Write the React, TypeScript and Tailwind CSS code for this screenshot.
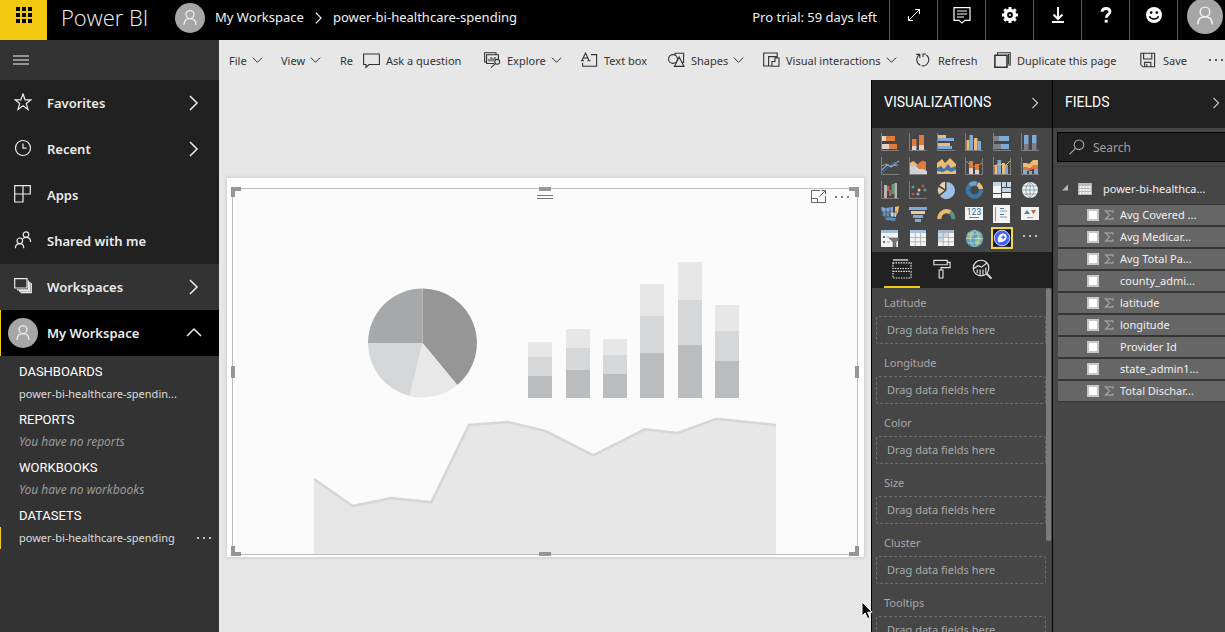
import type { ReactNode } from "react";

const OR = "#e07b3c";
const BL = "#7fa9d6";
const DB = "#3f74a8";
const YE = "#eebb75";
const LT = "#e3d3c6";
const GR = "#7d8185";
const WH = "#f4f4f4";
const AX = "#8d8d8d";

function Chevron({ dir, className }: { dir: "down" | "up" | "right"; className: string }) {
  const d = { down: "M1 2.5 L8 9.5 L15 2.5", up: "M1 10 L8 3 L15 10", right: "M2 1 L9 8 L2 15" }[dir];
  const box = dir === "right" ? "0 0 11 16" : "0 0 16 12";
  return (
    <svg viewBox={box} className={className} fill="none" stroke="currentColor" strokeWidth="1.5" aria-hidden="true">
      <path d={d} />
    </svg>
  );
}

function Person({ className }: { className: string }) {
  return (
    <svg viewBox="0 0 30 30" className={className} aria-hidden="true">
      <circle cx="15" cy="15" r="15" fill="#a6a6a6" />
      <g fill="none" stroke="#f2f2f2" strokeWidth="1.2">
        <circle cx="15" cy="11.6" r="4" />
        <path d="M9 22 C9 17.5 11.5 15.6 15 15.6 C18.5 15.6 21 17.5 21 22" />
      </g>
    </svg>
  );
}

function Dots({ className, fill = "currentColor" }: { className: string; fill?: string }) {
  return (
    <svg viewBox="0 0 16 4" className={className} fill={fill} aria-hidden="true">
      <circle cx="2" cy="2" r="1.1" />
      <circle cx="8" cy="2" r="1.1" />
      <circle cx="14" cy="2" r="1.1" />
    </svg>
  );
}

/* ---------- header ---------- */

const headerActions: { label: string; icon: ReactNode }[] = [
  {
    label: "Full screen",
    icon: (
      <svg viewBox="0 0 18 18" className="size-[18px]" fill="none" stroke="#fff" strokeWidth="1">
        <path d="M3.5 14.5 L14.5 3.5 M10 3.5 H14.5 V8 M3.5 10 V14.5 H8" />
      </svg>
    ),
  },
  {
    label: "Comments",
    icon: (
      <svg viewBox="0 0 18 18" className="size-[18px]" fill="none" stroke="#fff" strokeWidth="1.2">
        <path d="M1 1.6 H17 V14.4 H12 L9 17 L6 14.4 H1 Z M4 5 H14 M4 8 H14 M4 11 H11" />
      </svg>
    ),
  },
  {
    label: "Settings",
    icon: (
      <svg viewBox="0 0 18 18" className="size-[18px]">
        <circle cx="9" cy="9" r="4.6" fill="none" stroke="#fff" strokeWidth="3.4" />
        <path
          d="M9 1 V4 M9 14 V17 M1 9 H4 M14 9 H17 M3.3 3.3 L5.4 5.4 M12.6 12.6 L14.7 14.7 M3.3 14.7 L5.4 12.6 M12.6 5.4 L14.7 3.3"
          stroke="#fff"
          strokeWidth="3"
        />
        <circle cx="9" cy="9" r="1" fill="#fff" />
      </svg>
    ),
  },
  {
    label: "Download",
    icon: (
      <svg viewBox="0 0 18 18" className="size-[18px]" fill="none" stroke="#fff" strokeWidth="2">
        <path d="M9 1 V13 M4.5 8.5 L9 13 L13.5 8.5 M3 16 H15" />
      </svg>
    ),
  },
  {
    label: "Help",
    icon: (
      <svg viewBox="0 0 18 18" className="size-[18px]" fill="none" stroke="#fff" strokeWidth="2.8">
        <path d="M5 5.8 C5 3.6 6.6 2.5 9 2.5 C11.4 2.5 13 3.8 13 5.8 C13 8.4 9.2 8.4 9.2 11.8" />
        <path d="M7.7 15.2 H10.7" />
      </svg>
    ),
  },
  {
    label: "Feedback",
    icon: (
      <svg viewBox="0 0 18 18" className="size-[18px]">
        <circle cx="9" cy="9" r="8" fill="#fff" />
        <circle cx="6.2" cy="6.6" r="1.3" />
        <circle cx="11.8" cy="6.6" r="1.3" />
        <path d="M4.5 10.2 C6 14 12 14 13.5 10.2" fill="none" stroke="#000" strokeWidth="1.5" />
      </svg>
    ),
  },
];

function Header() {
  return (
    <header className="flex h-10 shrink-0 overflow-hidden bg-black text-[#f2f2f2]">
      <button aria-label="App launcher" className="flex w-[47px] shrink-0 justify-center bg-[#f2c811] pt-[7px]">
        <svg viewBox="0 0 16 16" className="size-4">
          {[0, 6, 12].map((y) => [0, 6, 12].map((x) => <rect key={`${x}-${y}`} x={x} y={y} width="4" height="4" />))}
        </svg>
      </button>
      <div className="flex min-w-0 flex-1 items-center pb-[5px] text-[13px]">
        <span className="w-32 shrink-0 pl-[14px] font-['Open_Sans'] text-[22px] font-light whitespace-nowrap">
          Power BI
        </span>
        <Person className="size-[30px] shrink-0" />
        <nav className="flex items-center gap-[10px] pl-[10px] whitespace-nowrap">
          <a href="#workspace">My Workspace</a>
          <Chevron dir="right" className="h-3 w-[9px]" />
          <a href="#report">power-bi-healthcare-spending</a>
        </nav>
        <span className="ml-auto pr-3 whitespace-nowrap">Pro trial: 59 days left</span>
      </div>
      {headerActions.map((a) => (
        <button
          key={a.label}
          aria-label={a.label}
          className="flex w-12 shrink-0 justify-center border-l border-[#5a5a5a] pt-[6px]"
        >
          {a.icon}
        </button>
      ))}
      <button aria-label="Account" className="flex w-12 shrink-0 items-center border-l border-[#5a5a5a] pb-2 pl-[9px]">
        <Person className="size-9 shrink-0" />
      </button>
    </header>
  );
}

/* ---------- sidebar ---------- */

const navItems: { label: string; icon: ReactNode; arrow?: boolean; active?: boolean }[] = [
  {
    label: "Favorites",
    arrow: true,
    icon: <path d="M9 1 L11.1 6.8 H17 L12.3 10.4 L14 16.4 L9 12.8 L4 16.4 L5.7 10.4 L1 6.8 H6.9 Z" />,
  },
  {
    label: "Recent",
    arrow: true,
    icon: (
      <>
        <circle cx="9" cy="9" r="7.5" />
        <path d="M9 4.5 V9.2 H12.5" />
      </>
    ),
  },
  { label: "Apps", icon: <path d="M0.7 0.7 H16.3 V9 H0.7 Z M9 0.7 V17 H0.7 V9" /> },
  {
    label: "Shared with me",
    icon: (
      <>
        <circle cx="5.8" cy="9.8" r="2.8" />
        <path d="M1.4 17.3 C1.4 14 3.2 12.6 5.8 12.6 C8.4 12.6 9.8 14.4 9.8 17.3" />
        <circle cx="12" cy="3.6" r="2.8" />
        <path d="M8.8 7.6 C10 6.6 11 6.4 12.2 6.4 C15 6.4 16.6 8.4 16.6 11" />
      </>
    ),
  },
  {
    label: "Workspaces",
    arrow: true,
    active: true,
    icon: (
      <>
        <path d="M0.7 1.7 H13 V11 H0.7 Z" />
        <path d="M14.5 3.5 V12.8 H3 M15.8 5 V14.2 H5 M17.3 6 V15.7 H6.5" />
      </>
    ),
  },
];

const groups = [
  { title: "DASHBOARDS", item: "power-bi-healthcare-spendin..." },
  { title: "REPORTS", item: "You have no reports", empty: true },
  { title: "WORKBOOKS", item: "You have no workbooks", empty: true },
  { title: "DATASETS", item: "power-bi-healthcare-spending", selected: true },
];

function Sidebar() {
  return (
    <aside className="flex w-[219px] shrink-0 flex-col bg-[#333] text-[#ececec]">
      <button aria-label="Toggle navigation" className="flex h-10 shrink-0 items-center pl-[13px]">
        <svg viewBox="0 0 16 10" className="h-[10px] w-4" stroke="#f2f2f2" strokeWidth="1">
          <path d="M0 1 H16 M0 5 H16 M0 9 H16" />
        </svg>
      </button>
      <nav className="bg-[#212121] text-[13px] font-semibold">
        {navItems.map((n) => (
          <a
            key={n.label}
            href={`#${n.label}`}
            className={`flex h-[46px] items-center pr-5 pl-[14px] ${n.active ? "bg-[#333]" : ""}`}
          >
            <svg
              viewBox="0 0 18 18"
              className="mb-[2px] size-[18px] shrink-0"
              fill="none"
              stroke="currentColor"
              strokeWidth="1.2"
              aria-hidden="true"
            >
              {n.icon}
            </svg>
            <span className="flex-1 pt-px pl-[15px]">{n.label}</span>
            {n.arrow && <Chevron dir="right" className="h-4 w-[11px]" />}
          </a>
        ))}
        <button className="flex h-[46px] w-full items-center border-l border-[#f2c811] bg-black pr-[17px] pl-[7px] text-left font-semibold">
          <Person className="size-[30px]" />
          <span className="flex-1 pt-px pl-[9px]">My Workspace</span>
          <Chevron dir="up" className="mb-[2px] h-3 w-4" />
        </button>
      </nav>
      <div className="flex flex-col gap-1 pt-[5px] text-[11px]">
        {groups.map((g) => (
          <section key={g.title}>
            <h2 className="flex h-[22px] items-center pl-[19px] font-['Roboto'] text-[13px] text-white">{g.title}</h2>
            <div
              className={`flex h-[22px] items-center justify-between border-l pr-[7px] pl-[18px] whitespace-nowrap ${g.selected ? "border-[#f2c811]" : "border-transparent"} ${g.empty ? "text-[12px] text-[#9b9b9b] italic" : "text-[#dedede]"}`}
            >
              {g.empty ? <span>{g.item}</span> : <a href={`#${g.title}`}>{g.item}</a>}
              {g.selected && (
                <button aria-label="More options">
                  <Dots className="h-1 w-4" />
                </button>
              )}
            </div>
          </section>
        ))}
      </div>
    </aside>
  );
}

/* ---------- toolbar ---------- */

const tools: { label: string; icon?: ReactNode; menu?: boolean }[] = [
  { label: "File", menu: true },
  { label: "View", menu: true },
  { label: "Re" },
  { label: "Ask a question", icon: <path d="M0.6 2 H16.4 V12.5 H6 L3 15.5 V12.5 H0.6 Z" /> },
  {
    label: "Explore",
    menu: true,
    icon: (
      <>
        <path d="M2.5 10 H0.6 V0.8 H12 V2.5 M10 11.5 H2.6 V2.8 H14.4 V7 M5 9.5 V7 M7 9.5 V5 M9 9.5 V6 M11 8 V5" />
        <circle cx="13.2" cy="9.8" r="2.4" />
        <path d="M11.4 11.6 L7 15.6" />
      </>
    ),
  },
  {
    label: "Text box",
    icon: <path d="M1 8.6 L4.5 1 L8 8.6 M2.2 6 H6.8 M0 8.8 H3 M6.5 8.8 H9.5 M10 2.6 H15.6 V14.2 H1.6 V11" />,
  },
  {
    label: "Shapes",
    menu: true,
    icon: (
      <>
        <circle cx="5" cy="7" r="4.4" />
        <path d="M7 3 V1.2 H15.6 V10.4 H14 M11.2 5 L16 14.4 H6.4 Z" />
      </>
    ),
  },
  {
    label: "Visual interactions",
    menu: true,
    icon: <path d="M9 14 H0.7 V1 H14.2 V5.5 M5.6 14 V4.6 H14.2 M9 14.2 V9.5 H12 V6 H16 V14.2 Z" />,
  },
  {
    label: "Refresh",
    icon: (
      <path d="M4.6 2.6 A6 6 0 0 0 5.4 13.2 M6.8 13.8 A6 6 0 0 0 11.2 3 M1.2 2.4 H4.8 V6 M8 5 V2 H11" />
    ),
  },
  {
    label: "Duplicate this page",
    icon: (
      <>
        <path d="M3.5 3 V0.8 H16.2 V13 H14" />
        <path d="M0.9 3.2 H13 V15.3 H0.9 Z" strokeWidth="1.6" />
        <path d="M14.6 2 V12" />
      </>
    ),
  },
  { label: "Save", icon: <path d="M0.8 1.2 H14.6 V14.8 H3 L0.8 12.6 Z M3.6 1.2 V7 H11.8 V1.2 M4.6 14.8 V10.4 H10.8 V14.8 M6.8 14.8 V12" /> },
];

function Toolbar() {
  return (
    <div className="flex h-10 shrink-0 items-center overflow-hidden bg-[#e7e7e7] pl-[10px] text-[11px] whitespace-nowrap text-[#333]">
      <div className="grid flex-1 grid-cols-[52px_59px_23px_121px_97px_87px_95px_152px_79px_146px_68px_18px] items-center">
        {tools.map((t) => (
          <button key={t.label} className="flex items-center">
            {t.icon && (
              <svg
                viewBox="0 0 17 17"
                className="mr-[6px] size-[17px] shrink-0"
                fill="none"
                stroke="#333"
                strokeWidth="1.1"
                aria-hidden="true"
              >
                {t.icon}
              </svg>
            )}
            <span className="pt-[2px]">{t.label}</span>
            {t.menu && <Chevron dir="down" className="ml-[5px] h-2 w-[11px] shrink-0" />}
          </button>
        ))}
        <button aria-label="More">
          <Dots className="h-1 w-4" />
        </button>
      </div>
    </div>
  );
}

/* ---------- report canvas ---------- */

const BASE = 209;
const bars = [
  { x: 295, tops: [153, 168, 187] },
  { x: 333, tops: [140, 159, 181] },
  { x: 370, tops: [150, 166, 185] },
  { x: 407, tops: [95, 127, 164] },
  { x: 445, tops: [73, 111, 156] },
  { x: 482, tops: [116, 142, 172] },
];
const shades = ["#e7e7e7", "#d6d7d8", "#bbbcbd"];
const trend =
  "81,290 119.6,317 158.3,309 198.3,313.3 236,236 275,233 313,242.3 360.3,266.3 411.7,240.3 444.5,244 484,229.7 543,236";

function Visual() {
  return (
    <svg viewBox="0 0 624 365" className="block h-auto w-full" role="img" aria-label="Empty visual">
      <path d="M189.5 154 V99.5 A54.5 54.5 0 0 1 224.3 195.9 Z" fill="#969696" />
      <path d="M189.5 154 L224.3 195.9 A54.5 54.5 0 0 1 176.6 207 Z" fill="#e8e8e8" />
      <path d="M189.5 154 L176.6 207 A54.5 54.5 0 0 1 135 154 Z" fill="#d6d7d9" />
      <path d="M189.5 154 H135 A54.5 54.5 0 0 1 189.5 99.5 Z" fill="#a7a8aa" />
      {bars.map((b) =>
        b.tops.map((top, i) => (
          <rect key={`${b.x}-${i}`} x={b.x} y={top} width="24" height={(b.tops[i + 1] ?? BASE) - top} fill={shades[i]} />
        )),
      )}
      <polygon points={`${trend} 543,365 81,365`} fill="#e7e7e7" />
      <polyline points={trend} fill="none" stroke="#d5d6d7" strokeWidth="2.6" />
    </svg>
  );
}

const handles = [
  "-top-[2px] -left-[2px] size-[10px] border-t-4 border-l-4",
  "-top-[2px] -right-[2px] size-[10px] border-t-4 border-r-4",
  "-bottom-[2px] -left-[2px] size-[10px] border-b-4 border-l-4",
  "-bottom-[2px] -right-[2px] size-[10px] border-b-4 border-r-4",
  "-top-[2px] left-1/2 h-1 w-3 -translate-x-1/2 border-t-4",
  "-bottom-[2px] left-1/2 h-1 w-3 -translate-x-1/2 border-t-4",
  "top-1/2 -left-[2px] h-3 w-1 -translate-y-1/2 border-l-4",
  "top-1/2 -right-[2px] h-3 w-1 -translate-y-1/2 border-l-4",
];

function Canvas() {
  return (
    <main className="relative flex-1 bg-[#e7e7e7] pt-[98px] pr-[7px] pl-2">
      <div className="bg-white pt-[10px] pr-[6px] pb-[2px] pl-[5px] shadow-[0_0_3px_1px_#cdcdcd]">
        <div className="relative border border-[#bdbdbd] bg-[#fbfbfb]">
          <Visual />
          {handles.map((h) => (
            <span key={h} className={`absolute border-[#969696] ${h}`} />
          ))}
          <span className="absolute top-[6px] left-1/2 h-1 w-4 -translate-x-1/2 border-y border-[#777]" />
          <div className="absolute top-[1px] right-[7px] flex items-center gap-2 text-[#666]">
            <button aria-label="Focus mode">
              <svg viewBox="0 0 15 13" className="h-[13px] w-[15px]" fill="none" stroke="currentColor" strokeWidth="1">
                <path d="M9 0.5 H0.5 V12.5 H14.5 V6 M0.5 8.5 H6.5 V12.5 M8.5 6.5 L14 1 M10.5 0.5 H14.5 V4.5" />
              </svg>
            </button>
            <button aria-label="More options">
              <Dots className="h-1 w-4" />
            </button>
          </div>
        </div>
      </div>
      <svg viewBox="0 0 12 19" className="absolute top-[521px] -right-[2px] z-10 h-[19px] w-3" aria-hidden="true">
        <path d="M1 1 V15 L4.2 12 L6.6 17.6 L9 16.6 L6.6 11.2 H11 Z" fill="#000" stroke="#fff" strokeWidth="1" />
      </svg>
    </main>
  );
}

/* ---------- visualizations pane ---------- */

const axes = <path d="M0.5 0 V17.5 H18" fill="none" stroke={AX} strokeWidth="0.8" />;

const visuals: { label: string; art: ReactNode; selected?: boolean }[] = [
  {
    label: "Stacked bar chart",
    art: (
      <>
        {axes}
        <path d="M1 3 H6 V8 H1 Z M1 11 H9 V16 H1 Z" fill={LT} />
        <path d="M5 3 H14 V8 H5 Z M8 11 H16 V16 H8 Z" fill={OR} />
      </>
    ),
  },
  {
    label: "Stacked column chart",
    art: (
      <>
        {axes}
        <path d="M3 6 H7.5 V13 H3 Z M10 2 H15 V12 H10 Z" fill={OR} />
        <path d="M3 13 H7.5 V17 H3 Z M10 12 H15 V17 H10 Z" fill={LT} />
      </>
    ),
  },
  {
    label: "Clustered bar chart",
    art: (
      <>
        {axes}
        <path d="M1 2 H9 V5 H1 Z M1 10 H13 V13 H1 Z" fill={YE} />
        <path d="M1 5 H17 V8 H1 Z M1 13 H15 V16 H1 Z" fill={BL} />
      </>
    ),
  },
  {
    label: "Clustered column chart",
    art: (
      <>
        {axes}
        <path d="M1.5 7 H4.5 V17 H1.5 Z M9 5 H12.5 V17 H9 Z" fill={YE} />
        <path d="M4.5 2 H8 V17 H4.5 Z M12.5 8 H16 V17 H12.5 Z" fill={BL} />
      </>
    ),
  },
  {
    label: "100% stacked bar chart",
    art: (
      <>
        {axes}
        <path d="M1 3 H6 V8 H1 Z M1 11 H8 V16 H1 Z" fill={GR} />
        <path d="M6 3 H16 V8 H6 Z M8 11 H16 V16 H8 Z" fill={BL} />
      </>
    ),
  },
  {
    label: "100% stacked column chart",
    art: (
      <>
        {axes}
        <path d="M3 11 H7.5 V17 H3 Z M11 10 H15.5 V17 H11 Z" fill={GR} />
        <path d="M3 2 H7.5 V11 H3 Z M11 2 H15.5 V10 H11 Z" fill={BL} />
      </>
    ),
  },
  {
    label: "Line chart",
    art: (
      <>
        {axes}
        <path d="M1 13 L6 8 L10 10 L18 4" fill="none" stroke={BL} strokeWidth="1.1" />
        <path d="M1 9 L5 7 L10 9 L17 8" fill="none" stroke="#a3a3a3" />
        <path d="M1 16 L7 10 L12 6 L17 5" fill="none" stroke={DB} />
      </>
    ),
  },
  {
    label: "Area chart",
    art: (
      <>
        {axes}
        <path d="M8 13 V8 L11 5 L14 3.5 L17 5 V15 Z" fill={OR} />
        <path d="M1 9 L4 8 L7 9 L10 12 L14 12 L18 14 V17 H1 Z" fill="#cfd3d6" />
        <path d="M1 6 L4 4 L7 6 L9 9 H1 Z" fill={YE} />
      </>
    ),
  },
  {
    label: "Stacked area chart",
    art: (
      <>
        <path d="M0 17 V6 L5 2 L8 6 L13 1 L19 7 V17 Z" fill={YE} />
        <path d="M0 14 V11 L4 9 L7 12 L11 7 L14 11 L19 9 V13 L14 15 L10 13 L6 15 Z" fill={DB} />
        <path d="M0 17 V15 L6 15.5 L10 14 L14 15.5 L19 13.5 V17 Z" fill={YE} />
      </>
    ),
  },
  {
    label: "Line and stacked column chart",
    art: (
      <>
        {axes}
        <path d="M17.5 1 V18" stroke={AX} strokeWidth="0.8" />
        <path d="M4 4 H8 V11 H4 Z M10 7 H14 V13 H10 Z" fill={OR} />
        <path d="M4 11 H8 V17 H4 Z M10 13 H14 V17 H10 Z" fill={LT} />
        <path d="M1 4 L6 9 L11 10 L17 6" fill="none" stroke={OR} />
      </>
    ),
  },
  {
    label: "Line and clustered column chart",
    art: (
      <>
        {axes}
        <path d="M17.5 1 V18" stroke={AX} strokeWidth="0.8" />
        <path d="M1.5 8 H4.5 V17 H1.5 Z M9 6 H12 V17 H9 Z" fill={YE} />
        <path d="M4.5 3 H8 V17 H4.5 Z M12 8 H15 V17 H12 Z" fill={BL} />
        <path d="M1 9 L7 7 L12 9 L17 4" fill="none" stroke={YE} />
      </>
    ),
  },
  {
    label: "Ribbon chart",
    art: (
      <>
        {axes}
        <path d="M2 6 H6 L8 7 L12 3 H17 V9 L12 10 L7 12 H2 Z" fill={YE} />
        <path d="M2 10 H6 L9 12 L12 8 H17 V12 H12 L7 14 H2 Z" fill={OR} />
        <path d="M2 13 H6 V17 H2 Z M8 14 H11 V17 H8 Z M13 12 H17 V17 H13 Z" fill={BL} />
      </>
    ),
  },
  {
    label: "Waterfall chart",
    art: (
      <>
        {axes}
        <path d="M3 4 H6 V17 H3 Z" fill="#b5b5b5" />
        <path d="M6 5 H8.5 V10 H6 Z" fill="#b8605a" />
        <path d="M8 9 H10.5 V15 H8 Z" fill="#b5604a" />
        <path d="M10.5 3 H13.5 V13 H10.5 Z" fill="#5c9b7d" />
        <path d="M13.5 2 H16 V17 H13.5 Z" fill="#b5b5b5" />
      </>
    ),
  },
  {
    label: "Scatter chart",
    art: (
      <>
        {axes}
        <circle cx="4" cy="6" r="1.5" fill="#5f9e8f" />
        <circle cx="10" cy="9" r="1.5" fill={YE} />
        <circle cx="14" cy="5" r="1.5" fill="#c0504d" />
        <circle cx="4" cy="13" r="1.5" fill="#c0504d" />
        <circle cx="9" cy="13" r="1.5" fill={BL} />
        <circle cx="16" cy="9" r="1.5" fill="#5f9e8f" />
      </>
    ),
  },
  {
    label: "Pie chart",
    art: (
      <>
        <path d="M9.5 9.5 V1 A8.5 8.5 0 1 1 3 15 Z" fill="#9dbfe8" />
        <path d="M8 8 L2.5 4.5 A8 8 0 0 1 8 0.5 Z" fill="#ecd3b4" />
        <path d="M7.5 9.5 L2 13.5 A8 8 0 0 1 1.5 6 Z" fill="#e8c79c" />
      </>
    ),
  },
  {
    label: "Donut chart",
    art: (
      <>
        <circle cx="9.5" cy="9" r="6.6" fill="none" stroke={DB} strokeWidth="4.4" />
        <path d="M12.5 3.1 A6.6 6.6 0 0 1 16 8" fill="none" stroke={YE} strokeWidth="4.4" />
        <path d="M5 4.2 A6.6 6.6 0 0 1 11.5 2.7" fill="none" stroke="#6f9fca" strokeWidth="4.4" />
      </>
    ),
  },
  {
    label: "Treemap",
    art: (
      <>
        <path d="M0 1 H8 V12 H0 Z M9 12 H18 V17 H9 Z M0 13 H8 V17 H0 Z" fill={WH} />
        <path d="M9 1 H13 V6 H9 Z M14 1 H18 V6 H14 Z M9 7 H18 V11 H9 Z M0 1 H8 V5 H0 Z" fill="#c6d4df" />
      </>
    ),
  },
  {
    label: "Map",
    art: (
      <>
        <circle cx="9" cy="9" r="8" fill={WH} />
        <path
          d="M1 9 H17 M2.5 5 H15.5 M2.5 13 H15.5 M9 1 V17 M9 1 C3.5 5 3.5 13 9 17 M9 1 C14.5 5 14.5 13 9 17"
          fill="none"
          stroke="#7e9cab"
          strokeWidth="0.9"
        />
      </>
    ),
  },
  {
    label: "Filled map",
    art: (
      <>
        <path d="M0 2 L5 3 L12 2 V8 L3 9 L1 7 Z" fill={BL} />
        <path d="M1 9 L8 8 L9 12 L15 13 L14 16 L5 15 Z" fill="#5b8fbf" />
        <path d="M9 7 H16 L15 12 L10 12 Z" fill="#c9dbe9" />
        <path d="M14 2 L18 1 L17 8 L14 9 Z" fill={YE} />
        <path d="M1 7 H16 M2 12 H14 M5 3 V14 M9 3 V12 M13 3 V13" stroke="#444" strokeWidth="0.7" />
      </>
    ),
  },
  {
    label: "Funnel",
    art: (
      <>
        <path d="M0 2 H18 V5 H0 Z M4 10 H14 V13 H4 Z" fill={BL} />
        <path d="M2 6 H16 V9 H2 Z" fill="#ecc9a3" />
        <path d="M6 14 H12 V17 H6 Z" fill={BL} />
      </>
    ),
  },
  {
    label: "Gauge",
    art: (
      <>
        <path d="M2.5 14 A7 7 0 0 1 13.5 7.5" fill="none" stroke={YE} strokeWidth="4" />
        <path d="M13 7.2 A7 7 0 0 1 16 14" fill="none" stroke="#5f8f86" strokeWidth="4" />
      </>
    ),
  },
  {
    label: "Card",
    art: (
      <>
        <path d="M0 2 H18 V15 H0 Z" fill={WH} />
        <text x="9" y="10" fontSize="8.5" textAnchor="middle" fill="#2f6190" fontFamily="Roboto, sans-serif">
          123
        </text>
        <path d="M4 12.5 H14" stroke="#777" />
      </>
    ),
  },
  {
    label: "Multi-row card",
    art: (
      <>
        <path d="M0 0 H17 V18 H0 Z" fill={WH} />
        <path d="M2.5 2 V16" stroke={AX} />
        <path d="M7 3.5 H11 M7 9.5 H11" stroke={DB} />
        <path d="M7 6 H14 M7 12 H14" stroke="#999" />
      </>
    ),
  },
  {
    label: "KPI",
    art: (
      <>
        <path d="M0 2 H18 V15 H0 Z" fill={WH} />
        <path d="M3 9 L6 5 L9 9 Z" fill="#4f8a7a" />
        <path d="M10 5 H15 L12.5 9.5 Z" fill="#c8663f" />
        <path d="M6 12.5 H12" stroke="#999" />
      </>
    ),
  },
  {
    label: "Slicer",
    art: (
      <>
        <path d="M0 1 H17 V18 H0 Z" fill={WH} />
        <path d="M0 1 H17 V4 H0 Z" fill="#9fbfd8" />
        <path d="M2 7 H4 V9 H2 Z M2 12 H4 V14 H2 Z" fill={DB} />
        <path d="M6 8 H8 M6 13 H9" stroke="#999" />
        <path d="M8 9 H19 L15 13 V18 H12 V13 Z" fill="#767676" stroke="#555" strokeWidth="0.6" />
      </>
    ),
  },
  {
    label: "Table",
    art: (
      <>
        <path d="M1 1 H17 V17 H1 Z" fill={WH} />
        <path d="M1 1 H17 V4 H1 Z" fill="#a4c2dc" />
        <path d="M1 8.5 H17 M1 12.8 H17 M6.3 4 V17 M11.6 4 V17" stroke="#a8a8a8" strokeWidth="0.8" />
      </>
    ),
  },
  {
    label: "Matrix",
    art: (
      <>
        <path d="M1 1 H17 V17 H1 Z" fill={WH} />
        <path d="M1 1 H17 V4 H1 Z" fill="#a9b9c8" />
        <path d="M1 4 H6 V12 H1 Z M6 4 H11 V8 H6 Z" fill="#c6d9e8" />
        <path d="M1 8.5 H17 M1 12.8 H17 M6.3 1 V17 M11.6 1 V17" stroke="#a8a8a8" strokeWidth="0.8" />
      </>
    ),
  },
  {
    label: "ArcGIS map",
    art: (
      <>
        <circle cx="9.5" cy="9.5" r="8.7" fill="#5f9fb8" />
        <path d="M3 4 L8 2 L9 6 L5 11 L2 9 Z M10 9 L15 6 L17 11 L12 17 L10 14 Z M11 2 L15 4 L12 5 Z" fill="#9aba7e" />
        <path
          d="M1 9.5 H18 M2.5 5 H16.5 M2.5 14 H16.5 M9.5 1 C4 5 4 14 9.5 18 M9.5 1 C15 5 15 14 9.5 18"
          fill="none"
          stroke="#cfe0e4"
          strokeWidth="0.6"
        />
      </>
    ),
  },
  {
    label: "Mapbox visual",
    selected: true,
    art: (
      <>
        <path d="M0 0 H19 V18 H0 Z" fill="#151a33" />
        <circle cx="9.5" cy="9" r="8.2" fill="#4264fb" stroke="#fff" strokeWidth="0.8" />
        <path d="M5.5 13.5 C4.1 8 6.9 4 11.1 4.3 C14.5 4.6 15.5 8.8 13.1 11.2 C11.1 13.2 8.5 13.6 5.5 13.5 Z" fill="#fff" />
        <path d="M10.7 5.6 L11.7 7.5 L13.5 8.2 L11.7 9 L10.7 10.8 L9.8 9 L8 8.2 L9.8 7.5 Z" fill="#4264fb" />
      </>
    ),
  },
];

const tabs: { label: string; art: ReactNode; active?: boolean }[] = [
  {
    label: "Fields",
    active: true,
    art: (
      <>
        <path d="M1 1 H17" strokeWidth="1.4" />
        <path d="M1 4 H20 V10 H1 Z M1 13 H20 V20 H1 Z" strokeDasharray="1.6 1.1" />
      </>
    ),
  },
  {
    label: "Format",
    art: <path d="M2 1.5 H16 V6 H2 Z M16 3.5 H19 V9 H9.5 V11.5 M7.5 11.5 H11.5 V20 H7.5 Z" />,
  },
  {
    label: "Analytics",
    art: (
      <>
        <circle cx="9.5" cy="9.5" r="8.2" />
        <path d="M15.5 15.5 L20.5 20.5" strokeWidth="2" />
        <path d="M2 10 L6.5 7 L10 8.5 L16 4 M5.5 11 V15 M8.5 11 V17 M11.5 11 V17 M14.5 9 V15" />
      </>
    ),
  },
];

const wells = ["Latitude", "Longitude", "Color", "Size", "Cluster", "Tooltips"];

function PaneHeader({ title }: { title: string }) {
  return (
    <div className="flex h-12 shrink-0 items-center justify-between bg-[#212121] pr-[13px] pb-[3px] pl-3">
      <h2 className="font-['Roboto'] text-[14px] text-white">{title}</h2>
      <button aria-label={`Collapse ${title.toLowerCase()}`} className="text-[#d0d0d0]">
        <Chevron dir="right" className="h-3 w-2" />
      </button>
    </div>
  );
}

function Visualizations() {
  return (
    <section className="flex w-[182px] shrink-0 flex-col border-x border-black bg-[#464646]">
      <PaneHeader title="VISUALIZATIONS" />
      <div className="grid h-[124px] shrink-0 grid-cols-[repeat(6,28px)] grid-rows-[repeat(5,24px)] pt-[2px] pl-1">
        {visuals.map((v) => (
          <button key={v.label} aria-label={v.label} className="flex items-center justify-center">
            <svg
              viewBox="0 0 19 18"
              className={v.selected ? "box-content h-[18px] w-[18px] border-2 border-[#f2d64a]" : "h-[18px] w-[19px]"}
            >
              {v.art}
            </svg>
          </button>
        ))}
        <button aria-label="Import visual" className="flex items-center justify-center pb-1">
          <Dots className="h-1 w-4" fill="#ddd" />
        </button>
      </div>
      <div role="tablist" className="flex h-9 shrink-0 gap-1 bg-[#212121] pl-3">
        {tabs.map((t) => (
          <button
            key={t.label}
            role="tab"
            aria-label={t.label}
            aria-selected={t.active ?? false}
            className={`flex w-9 items-center justify-center border-b-2 ${t.active ? "border-[#f2c811]" : "border-transparent"}`}
          >
            <svg viewBox="0 0 21 21" className="size-5" fill="none" stroke="#e4e4e4" strokeWidth="1.2">
              {t.art}
            </svg>
          </button>
        ))}
      </div>
      <div className="flex min-h-0 flex-1 overflow-hidden">
        <div className="flex-1 pl-1 text-[11px] text-[#a9a9a9]">
          {wells.map((w) => (
            <div key={w} className="h-[60px]">
              <div className="flex h-7 items-center pt-[2px] pl-2">{w}</div>
              <div className="flex h-7 items-center rounded-[3px] border border-dashed border-[#6e6e6e] pl-[10px]">
                Drag data fields here
              </div>
            </div>
          ))}
        </div>
        <div className="mr-px h-[253px] w-[5px] rounded-[3px] bg-[#7b7b7b]" />
      </div>
    </section>
  );
}

/* ---------- fields pane ---------- */

const fields = [
  { name: "Avg Covered ...", sum: true },
  { name: "Avg Medicar...", sum: true },
  { name: "Avg Total Pa...", sum: true },
  { name: "county_admi...", sum: false },
  { name: "latitude", sum: true },
  { name: "longitude", sum: true },
  { name: "Provider Id", sum: false },
  { name: "state_admin1...", sum: false },
  { name: "Total Dischar...", sum: true },
];

function Fields() {
  return (
    <section className="flex w-[172px] shrink-0 flex-col overflow-hidden bg-[#464646] text-[11px] text-[#f0f0f0]">
      <div className="-mr-2 shrink-0">
        <PaneHeader title="FIELDS" />
      </div>
      <div className="border-b border-[#3a3a3a] pt-1 pb-1 pl-1">
        <label className="flex h-[30px] items-center gap-2 border border-r-0 border-black bg-[#212121] pl-[11px]">
          <svg viewBox="0 0 16 16" className="size-4 shrink-0" fill="none" stroke="#a9a9a9" strokeWidth="1.1">
            <circle cx="10" cy="5.8" r="4.8" />
            <path d="M6.4 9.4 L0.5 15.3" />
          </svg>
          <input
            type="search"
            aria-label="Search"
            placeholder="Search"
            className="w-full min-w-0 bg-transparent pt-px text-[12px] placeholder-[#a0a0a0] outline-none"
          />
        </label>
      </div>
      <button className="mt-[10px] flex h-6 items-center pl-2 text-left">
        <svg viewBox="0 0 8 8" className="mb-[2px] size-2">
          <path d="M7 0.5 V6.5 H1 Z" fill="#b5b5b5" />
        </svg>
        <svg viewBox="0 0 14 12" className="ml-[9px] h-3 w-[14px]">
          <rect width="14" height="12" fill="#b9b9b9" />
          {[3, 6, 9].map((y) => [1.5, 4.5, 7.5, 10.5].map((x) => <rect key={`${x}-${y}`} x={x} y={y} width="2" height="2" fill="#fff" />))}
        </svg>
        <span className="ml-[11px] whitespace-nowrap">power-bi-healthca...</span>
      </button>
      <ul className="mt-[3px] ml-[5px] flex flex-col gap-[2px] border-y border-[#353535] bg-[#353535]">
        {fields.map((f) => (
          <li key={f.name} className="h-5 bg-[#666]">
            <label className="flex h-5 items-center pl-[29px]">
              <input type="checkbox" className="size-3 shrink-0 appearance-none border-2 border-[#c8c8c8] bg-white" />
              <span className="w-[21px] pl-[5px]">
                {f.sum && (
                  <svg viewBox="0 0 10 10" className="size-[10px]" fill="none" stroke="#9c9c9c" strokeWidth="1.4">
                    <path d="M9 2.8 V1 H1.5 L5.5 5 L1.5 9 H9 V7.2" />
                  </svg>
                )}
              </span>
              <span className="whitespace-nowrap">{f.name}</span>
            </label>
          </li>
        ))}
      </ul>
    </section>
  );
}

export default function App() {
  return (
    <div className="flex h-screen flex-col overflow-hidden font-['Noto_Sans',sans-serif]">
      <Header />
      <div className="flex min-h-0 flex-1">
        <Sidebar />
        <div className="flex min-w-0 flex-1 flex-col">
          <Toolbar />
          <div className="flex min-h-0 flex-1">
            <Canvas />
            <Visualizations />
            <Fields />
          </div>
        </div>
      </div>
    </div>
  );
}
